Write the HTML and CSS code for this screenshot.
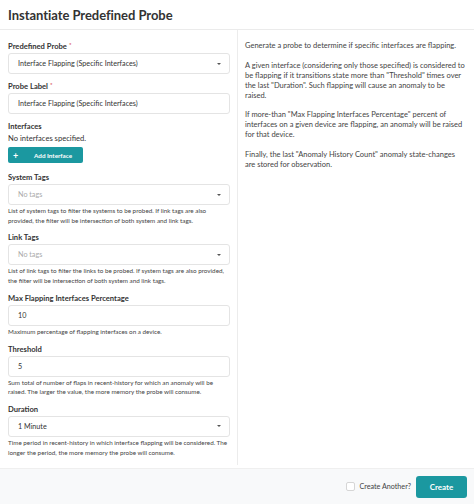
FILE: index.html
```html
<!DOCTYPE html>
<html>
<head>
<meta charset="utf-8">
<link rel="stylesheet" href="styles.css">
</head>
<body>
<div class="modal">
  <div class="header"><h1 class="title">Instantiate Predefined Probe</h1></div>
  <div class="content">
    <div class="form">
      <div class="field">
        <div class="label">Predefined Probe<span class="req">*</span></div>
        <div class="control select"><span class="value">Interface Flapping (Specific Interfaces)</span><span class="caret"></span></div>
      </div>
      <div class="field">
        <div class="label">Probe Label<span class="req">*</span></div>
        <div class="control"><span class="value">Interface Flapping (Specific Interfaces)</span></div>
      </div>
      <div class="field field-interfaces">
        <div class="label">Interfaces</div>
        <div class="none">No interfaces specified.</div>
        <button class="add-btn"><span class="plus">+</span><span>Add Interface</span></button>
      </div>
      <div class="field">
        <div class="label">System Tags</div>
        <div class="control select"><span class="placeholder">No tags</span><span class="caret"></span></div>
        <div class="help">List of system tags to filter the systems to be probed. If link tags are also provided, the filter will be intersection of both system and link tags.</div>
      </div>
      <div class="field">
        <div class="label">Link Tags</div>
        <div class="control select"><span class="placeholder">No tags</span><span class="caret"></span></div>
        <div class="help">List of link tags to filter the links to be probed. If system tags are also provided, the filter will be intersection of both system and link tags.</div>
      </div>
      <div class="field">
        <div class="label">Max Flapping Interfaces Percentage</div>
        <div class="control"><span class="value">10</span></div>
        <div class="help">Maximum percentage of flapping interfaces on a device.</div>
      </div>
      <div class="field">
        <div class="label">Threshold</div>
        <div class="control"><span class="value">5</span></div>
        <div class="help">Sum total of number of flaps in recent-history for which an anomaly will be raised. The larger the value, the more memory the probe will consume.</div>
      </div>
      <div class="field">
        <div class="label">Duration</div>
        <div class="control select"><span class="value">1 Minute</span><span class="caret"></span></div>
        <div class="help">Time period in recent-history in which interface flapping will be considered. The longer the period, the more memory the probe will consume.</div>
      </div>
    </div>
    <div class="desc">
      <p>Generate a probe to determine if specific interfaces are flapping.</p>
      <p>A given interface (considering only those specified) is considered to be flapping if it transitions state more than "Threshold" times over the last "Duration". Such flapping will cause an anomaly to be raised.</p>
      <p>If more-than "Max Flapping Interfaces Percentage" percent of interfaces on a given device are flapping, an anomaly will be raised for that device.</p>
      <p>Finally, the last "Anomaly History Count" anomaly state-changes are stored for observation.</p>
    </div>
  </div>
  <div class="footer">
    <label class="check"><span class="box"></span><span>Create Another?</span></label>
    <button class="create">Create</button>
  </div>
</div>
</body>
</html>
```
FILE: styles.css
```css
* { box-sizing: border-box; }
html, body { margin: 0; padding: 0; }
body {
  font-family: Lato, "Open Sans", sans-serif;
  color: #333;
  background: #fff;
  width: 474px;
  height: 504px;
  overflow: hidden;
}
.modal { display: flex; flex-direction: column; height: 504px; }
.header {
  height: 30px;
  border-bottom: 1px solid #ebebeb;
  padding: 0 8px;
  display: flex;
  align-items: center;
}
.title { margin: 0; font-size: 13px; font-weight: 700; color: #333; letter-spacing: -0.05px; }
.content { display: flex; flex: 1; min-height: 0; }
.form {
  width: 238px;
  padding: 11px 7px 0 8px;
  border-right: 1px solid #ececec;
  margin-bottom: 3px;
}
.field { margin-bottom: 7px; }
.field-interfaces { margin-bottom: 9px; }
.label { font-size: 7.6px; font-weight: 700; line-height: 10px; margin-bottom: 2px; color: #333; }
.req { color: #d9534f; font-size: 6px; vertical-align: top; margin-left: 2px; line-height: 8px; }
.control {
  height: 21px;
  border: 1px solid #e4e4e4;
  border-radius: 3px;
  padding: 0 8px 0 9px;
  display: flex;
  align-items: center;
  justify-content: space-between;
  font-size: 7.2px;
}
.value { color: #333; }
.placeholder { color: #aaa; }
.caret {
  width: 0; height: 0;
  border-left: 2px solid transparent;
  border-right: 2px solid transparent;
  border-top: 2px solid #555;
}
.help { font-size: 6.3px; line-height: 9.7px; color: #444; margin-top: 1px; }
.none { font-size: 7.6px; line-height: 10px; margin: 2px 0 4px; color: #333; }
.add-btn {
  width: 75px; height: 16px;
  background: #1b98a0;
  border: none;
  border-radius: 2px;
  color: #fff;
  font-family: inherit;
  font-size: 6.3px;
  font-weight: 700;
  display: flex;
  align-items: center;
  padding: 0 0 0 5px;
  margin: 0;
}
.plus { font-size: 9px; font-weight: 700; width: 21px; text-align: left; line-height: 1; }
.desc {
  flex: 1;
  padding: 11px 7.5px 0 7px;
  font-size: 7.5px;
  line-height: 10px;
  color: #444;
}
.desc p { margin: 0 0 9.5px; }
.footer {
  height: 36px;
  background: #f8f9fa;
  border-top: 1px solid #efefef;
  display: flex;
  align-items: center;
  justify-content: flex-end;
  padding: 0 7px 0 0;
}
.check { display: flex; align-items: center; font-size: 7.2px; color: #444; margin-right: 5px; }
.box {
  width: 9px; height: 9px;
  border: 1px solid #d6d6d6;
  border-radius: 2px;
  background: #fff;
  margin-right: 4px;
}
.create {
  width: 51px; height: 22px;
  background: #1b98a0;
  color: #fff;
  border: none;
  border-radius: 3px;
  font-family: inherit;
  font-size: 8px;
  font-weight: 700;
}
```
